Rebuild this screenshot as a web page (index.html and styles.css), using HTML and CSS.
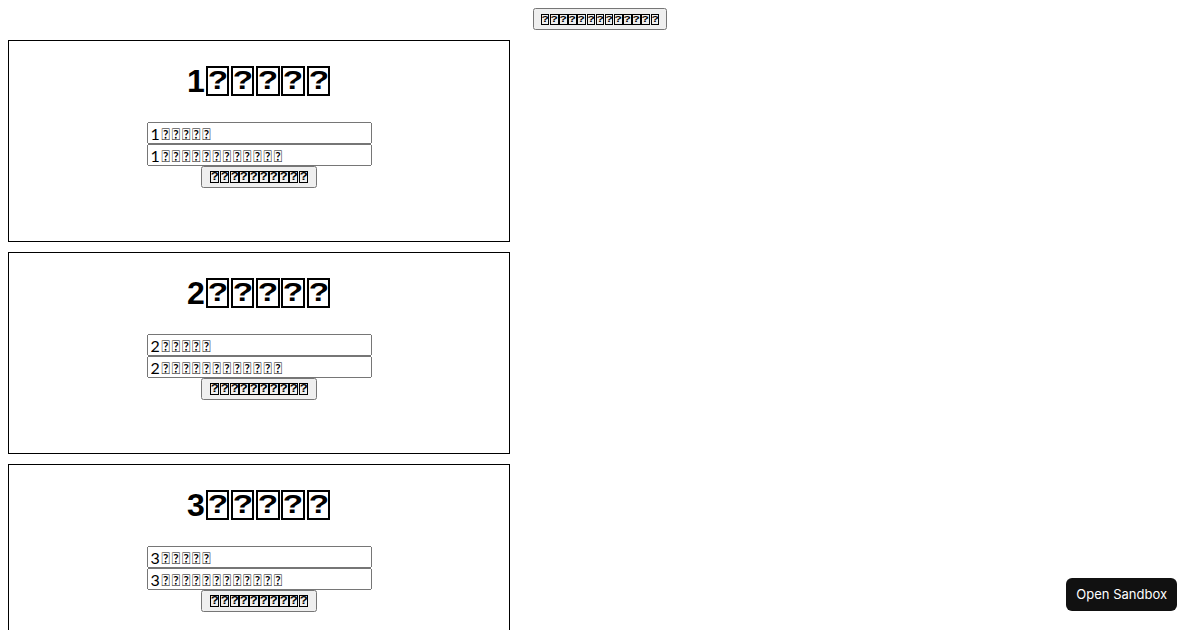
FILE: index.html
```html
<!DOCTYPE html>
<html>
<head>
<meta charset="utf-8">
<link rel="stylesheet" href="styles.css">
</head>
<body>
<div class="top">
  <button class="btn btn-top"><span class="q"><span>?</span></span><span class="q"><span>?</span></span><span class="q"><span>?</span></span><span class="q"><span>?</span></span><span class="q"><span>?</span></span><span class="q"><span>?</span></span><span class="q"><span>?</span></span><span class="q"><span>?</span></span><span class="q"><span>?</span></span><span class="q"><span>?</span></span><span class="q"><span>?</span></span><span class="q"><span>?</span></span><span class="q"><span>?</span></span></button>
</div>

<div class="card">
  <h1 class="title">1<span class="q"><span>?</span></span><span class="q"><span>?</span></span><span class="q"><span>?</span></span><span class="q"><span>?</span></span><span class="q"><span>?</span></span></h1>
  <input class="field" type="text" value="1&#x10FFFD;&#x10FFFD;&#x10FFFD;&#x10FFFD;&#x10FFFD;">
  <input class="field" type="text" value="1&#x10FFFD;&#x10FFFD;&#x10FFFD;&#x10FFFD;&#x10FFFD;&#x10FFFD;&#x10FFFD;&#x10FFFD;&#x10FFFD;&#x10FFFD;&#x10FFFD;&#x10FFFD;">
  <button class="btn"><span class="q"><span>?</span></span><span class="q"><span>?</span></span><span class="q"><span>?</span></span><span class="q"><span>?</span></span><span class="q"><span>?</span></span><span class="q"><span>?</span></span><span class="q"><span>?</span></span><span class="q"><span>?</span></span><span class="q"><span>?</span></span><span class="q"><span>?</span></span></button>
</div>

<div class="card">
  <h1 class="title">2<span class="q"><span>?</span></span><span class="q"><span>?</span></span><span class="q"><span>?</span></span><span class="q"><span>?</span></span><span class="q"><span>?</span></span></h1>
  <input class="field" type="text" value="2&#x10FFFD;&#x10FFFD;&#x10FFFD;&#x10FFFD;&#x10FFFD;">
  <input class="field" type="text" value="2&#x10FFFD;&#x10FFFD;&#x10FFFD;&#x10FFFD;&#x10FFFD;&#x10FFFD;&#x10FFFD;&#x10FFFD;&#x10FFFD;&#x10FFFD;&#x10FFFD;&#x10FFFD;">
  <button class="btn"><span class="q"><span>?</span></span><span class="q"><span>?</span></span><span class="q"><span>?</span></span><span class="q"><span>?</span></span><span class="q"><span>?</span></span><span class="q"><span>?</span></span><span class="q"><span>?</span></span><span class="q"><span>?</span></span><span class="q"><span>?</span></span><span class="q"><span>?</span></span></button>
</div>

<div class="card">
  <h1 class="title">3<span class="q"><span>?</span></span><span class="q"><span>?</span></span><span class="q"><span>?</span></span><span class="q"><span>?</span></span><span class="q"><span>?</span></span></h1>
  <input class="field" type="text" value="3&#x10FFFD;&#x10FFFD;&#x10FFFD;&#x10FFFD;&#x10FFFD;">
  <input class="field" type="text" value="3&#x10FFFD;&#x10FFFD;&#x10FFFD;&#x10FFFD;&#x10FFFD;&#x10FFFD;&#x10FFFD;&#x10FFFD;&#x10FFFD;&#x10FFFD;&#x10FFFD;&#x10FFFD;">
  <button class="btn"><span class="q"><span>?</span></span><span class="q"><span>?</span></span><span class="q"><span>?</span></span><span class="q"><span>?</span></span><span class="q"><span>?</span></span><span class="q"><span>?</span></span><span class="q"><span>?</span></span><span class="q"><span>?</span></span><span class="q"><span>?</span></span><span class="q"><span>?</span></span></button>
</div>

<a class="sandbox">Open Sandbox</a>
</body>
</html>
```
FILE: styles.css
```css
html, body {
  font-family: "Liberation Sans", Arial, sans-serif;
}
body {
  margin: 8px;
  background: #fff;
  color: #000;
}
.top {
  height: 22px;
  text-align: center;
}
.btn {
  font-family: "Liberation Sans", Arial, sans-serif;
  font-size: 12.6px;
  color: #000;
  height: 22px;
  padding: 0 6px;
  line-height: 16px;
  vertical-align: top;
}
.btn-top {
  font-size: 11.6px;
}
.card {
  width: 500px;
  height: 200px;
  border: 1px solid #000;
  margin: 10px 0;
  text-align: center;
}
.title {
  font-size: 32px;
  font-weight: bold;
  margin: 22px 0;
  line-height: 37px;
}
.field {
  display: block;
  box-sizing: border-box;
  width: 225px;
  height: 22px;
  margin: 0 auto;
  padding: 0 2px;
  font-family: Lato, "Liberation Sans", sans-serif;
  font-size: 16px;
  letter-spacing: 1.7px;
  color: #000;
}
.q {
  display: inline-block;
  box-sizing: border-box;
  width: 0.74em;
  height: 0.93em;
  margin: 0 0.025em;
  border: 0.07em solid #000;
  vertical-align: -0.13em;
  text-align: center;
  overflow: hidden;
}
.q > span {
  display: block;
  font-size: 0.8em;
  font-weight: bold;
  line-height: 0.975;
  transform: scaleX(1.3);
}
.sandbox {
  position: fixed;
  right: 23px;
  bottom: 19px;
  background: #111;
  color: #fff;
  font-family: Inter, "Liberation Sans", sans-serif;
  font-size: 13px;
  line-height: 17px;
  padding: 8px 10px;
  border-radius: 6px;
}
```
